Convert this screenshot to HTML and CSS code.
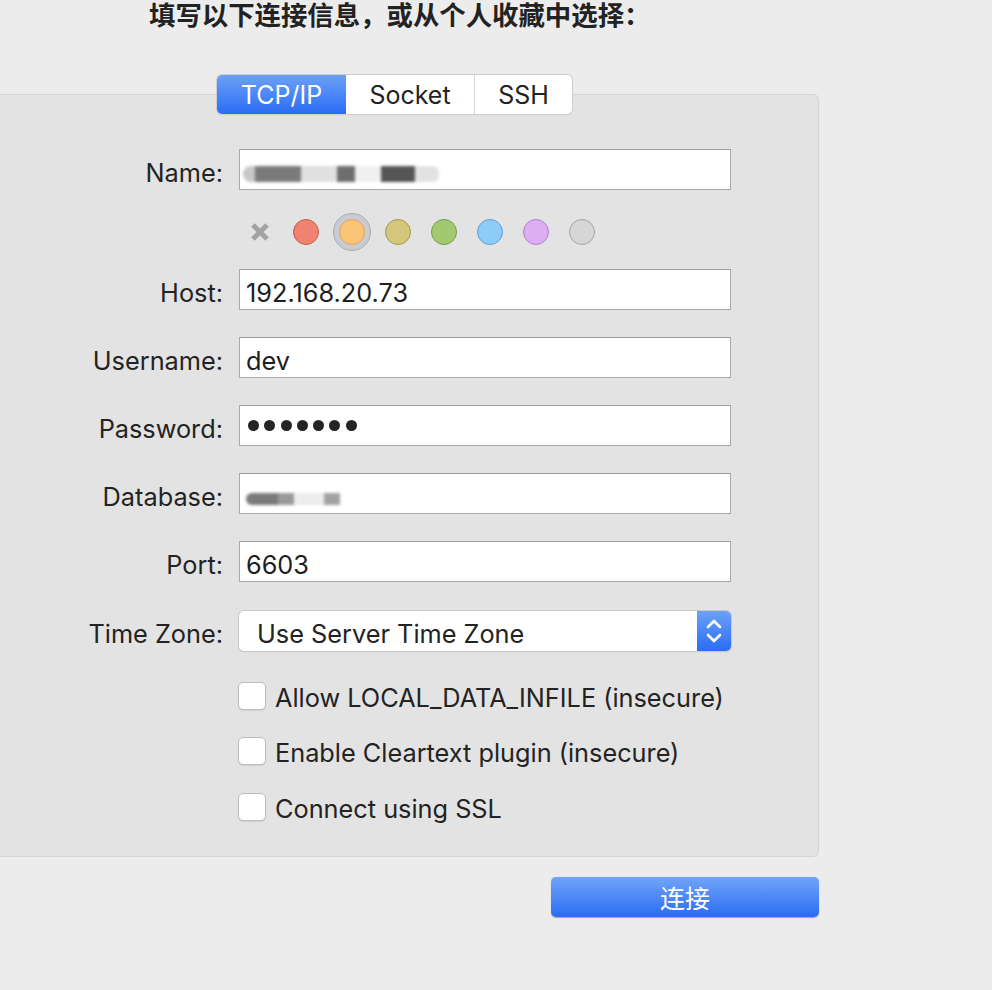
FILE: index.html
```html
<!DOCTYPE html>
<html>
<head>
<meta charset="utf-8">
<link rel="stylesheet" href="styles.css">
</head>
<body>
<div class="title">填写以下连接信息，或从个人收藏中选择：</div>
<div class="tabs">
  <div class="tab tab-active tab-tcp">TCP/IP</div>
  <div class="tab tab-socket">Socket</div>
  <div class="tab tab-ssh">SSH</div>
</div>
<div class="panel">
  <div class="form">
    <label class="label">Name:</label>
    <div class="field"><span class="blur blur-name"><i class="b1"></i><i class="b2"></i><i class="b3"></i><i class="b4"></i><i class="b5"></i><i class="b6"></i><i class="b7"></i></span></div>

    <div class="colors">
      <svg class="xmark" width="22" height="22" viewBox="0 0 22 22"><path d="M4 4 L18 18 M18 4 L4 18" stroke="#a3a3a3" stroke-width="5" stroke-linecap="butt"/></svg>
      <span class="dot dot-red"></span>
      <span class="ring"><span class="dot dot-orange"></span></span>
      <span class="dot dot-olive"></span>
      <span class="dot dot-green"></span>
      <span class="dot dot-blue"></span>
      <span class="dot dot-purple"></span>
      <span class="dot dot-gray"></span>
    </div>

    <label class="label">Host:</label>
    <div class="field">192.168.20.73</div>

    <label class="label">Username:</label>
    <div class="field">dev</div>

    <label class="label">Password:</label>
    <div class="field pw"><span class="pd"></span><span class="pd"></span><span class="pd"></span><span class="pd"></span><span class="pd"></span><span class="pd"></span><span class="pd"></span></div>

    <label class="label">Database:</label>
    <div class="field"><span class="blur blur-db"><i class="c1"></i><i class="c2"></i><i class="c3"></i><i class="c4"></i></span></div>

    <label class="label">Port:</label>
    <div class="field">6603</div>

    <label class="label label-tz">Time Zone:</label>
    <div class="select">
      <span class="select-text">Use Server Time Zone</span>
      <span class="stepper">
        <svg width="34" height="40" viewBox="0 0 34 40"><path d="M11 16 L17 10 L23 16 M11 24 L17 30 L23 24" fill="none" stroke="#fff" stroke-width="2.6" stroke-linecap="round" stroke-linejoin="round"/></svg>
      </span>
    </div>

    <div class="check check-1"><span class="box"></span><span>Allow LOCAL_DATA_INFILE (insecure)</span></div>
    <div class="check check-2"><span class="box"></span><span>Enable Cleartext plugin (insecure)</span></div>
    <div class="check check-3"><span class="box"></span><span>Connect using SSL</span></div>
  </div>
</div>
<div class="actions">
  <div class="btn">连接</div>
</div>
</body>
</html>
```
FILE: styles.css
```css
html, body {
  margin: 0;
  padding: 0;
}
body {
  background: #ececec;
  width: 992px;
  height: 990px;
  overflow: hidden;
  font-family: Inter, "Liberation Sans", "Noto Sans CJK SC", sans-serif;
  color: #232323;
}
.title {
  font-family: "Noto Sans CJK SC", sans-serif;
  font-weight: 700;
  font-size: 26.4px;
  line-height: 27px;
  padding-left: 149px;
  color: #222;
}
.tabs {
  display: flex;
  margin-top: 48px;
  margin-left: 217px;
  width: 355px;
  height: 39px;
  margin-bottom: -20px;
  position: relative;
  z-index: 1;
  border-radius: 5px;
  background: #fff;
  box-shadow: 0 0 0 1px #cdcdcd, 0 1px 1px rgba(0,0,0,0.12);
}
.tab {
  display: flex;
  align-items: center;
  justify-content: center;
  font-size: 25px;
  color: #232323;
}
.tab-tcp { width: 129px; }
.tab-socket { width: 129px; border-right: 1px solid #d6d6d6; box-sizing: border-box; }
.tab-ssh { width: 97px; }
.tab-active {
  color: #fff;
  background: linear-gradient(#6ca0f7, #2a6df4);
  border-radius: 5px 0 0 5px;
}
.panel {
  width: 819px;
  box-sizing: border-box;
  background: #e3e3e3;
  border: 1px solid #d4d4d4;
  border-left: none;
  border-radius: 0 6px 6px 0;
  padding: 54px 0 35px 0;
}
.form {
  display: grid;
  grid-template-columns: 223px 492px;
  column-gap: 16px;
  row-gap: 27px;
  align-items: center;
}
.label {
  text-align: right;
  font-size: 25.3px;
  line-height: 30px;
  padding-top: 6px;
  color: #232323;
}
.field {
  height: 41px;
  box-sizing: border-box;
  background: #fff;
  border: 1px solid #a9a9a9;
  border-top-color: #9c9c9c;
  padding-left: 6px;
  font-size: 25.3px;
  line-height: 45px;
  color: #1e1e1e;
  overflow: hidden;
}
.blur {
  display: inline-flex;
  align-items: center;
  filter: blur(1.4px);
  vertical-align: middle;
}
.blur i {
  display: inline-block;
  height: 16px;
}
.blur-name { margin-left: -3px; margin-top: -2px; }
.blur-name .b1 { width: 12px; background: #c8c8c8; border-radius: 8px 0 0 8px; }
.blur-name .b2 { width: 46px; background: #7a7a7a; }
.blur-name .b3 { width: 36px; background: #e0e0e0; }
.blur-name .b4 { width: 18px; background: #6e6e6e; }
.blur-name .b5 { width: 26px; background: #f0f0f0; }
.blur-name .b6 { width: 34px; background: #555; }
.blur-name .b7 { width: 24px; background: #e2e2e2; border-radius: 0 6px 6px 0; }
.blur-db { margin-top: 0; }
.blur-db i { height: 12px; }
.blur-db .c1 { width: 32px; background: #7a7a7a; border-radius: 6px 0 0 6px; }
.blur-db .c2 { width: 16px; background: #999; }
.blur-db .c3 { width: 30px; background: #ededed; }
.blur-db .c4 { width: 16px; background: #a2a2a2; }
.pw {
  display: flex;
  align-items: center;
  gap: 5.3px;
  padding-left: 8px;
}
.pd {
  width: 11px;
  height: 11px;
  border-radius: 50%;
  background: #242424;
}
.colors {
  grid-column: 2;
  display: flex;
  align-items: center;
  height: 38px;
  margin: -4px 0 -9px 0;
  padding-left: 10px;
}
.xmark {
  width: 22px;
  height: 22px;
  margin-right: 22px;
}
.dot {
  width: 26px;
  height: 26px;
  box-sizing: border-box;
  border-radius: 50%;
  border: 1.5px solid;
  margin-right: 20px;
  flex: none;
}
.ring {
  width: 38px;
  height: 38px;
  box-sizing: border-box;
  border-radius: 50%;
  background: #c8ccd4;
  border: 1.5px solid #a9abb0;
  display: flex;
  align-items: center;
  justify-content: center;
  margin-left: -6px;
  margin-right: 14px;
}
.ring .dot { margin: 0; }
.dot-red { background: #ef836f; border-color: #c25c4a; }
.dot-orange { background: #fbc577; border-color: #e3a455; }
.dot-olive { background: #d5c77a; border-color: #a69555; }
.dot-green { background: #a1ca70; border-color: #6f9d48; }
.dot-blue { background: #8dcbfa; border-color: #5d9fd6; }
.dot-purple { background: #ddaef4; border-color: #b080cf; }
.dot-gray { background: #d6d6d6; border-color: #a5a5a5; }
.label-tz { margin-top: 2px; }
.select {
  margin-top: 2px;
  height: 40px;
  box-sizing: border-box;
  display: flex;
  align-items: center;
  background: #fff;
  border-radius: 5px;
  box-shadow: 0 0 0 1px #c9c9c9, 0 1px 1px rgba(0,0,0,0.22);
  overflow: hidden;
}
.select-text {
  flex: 1;
  padding-left: 18px;
  padding-top: 4px;
  font-size: 25.3px;
  color: #232323;
}
.stepper {
  width: 34px;
  height: 40px;
  background: linear-gradient(#6ca0f7, #2a6df4);
  display: flex;
}
.check {
  grid-column: 2;
  display: flex;
  align-items: center;
  gap: 9px;
  margin-left: -1px;
  font-size: 25.3px;
  color: #232323;
  height: 28px;
}
.check span:last-child { padding-top: 2px; }
.check-1 { margin-top: 4px; }
.check-3 { margin-top: 1px; }
.box {
  width: 28px;
  height: 28px;
  box-sizing: border-box;
  background: #fff;
  border: 1px solid #bdbdbd;
  border-radius: 5px;
  box-shadow: 0 1px 1px rgba(0,0,0,0.08);
  flex: none;
}
.actions {
  width: 819px;
  display: flex;
  justify-content: flex-end;
  margin-top: 20px;
}
.btn {
  width: 268px;
  height: 40px;
  border-radius: 5px;
  background: linear-gradient(#72a5f8, #2a6cf3);
  box-shadow: 0 0.5px 1px rgba(0,0,0,0.3);
  color: #fff;
  font-family: "Noto Sans CJK SC", sans-serif;
  font-size: 25px;
  display: flex;
  align-items: center;
  justify-content: center;
}
```
